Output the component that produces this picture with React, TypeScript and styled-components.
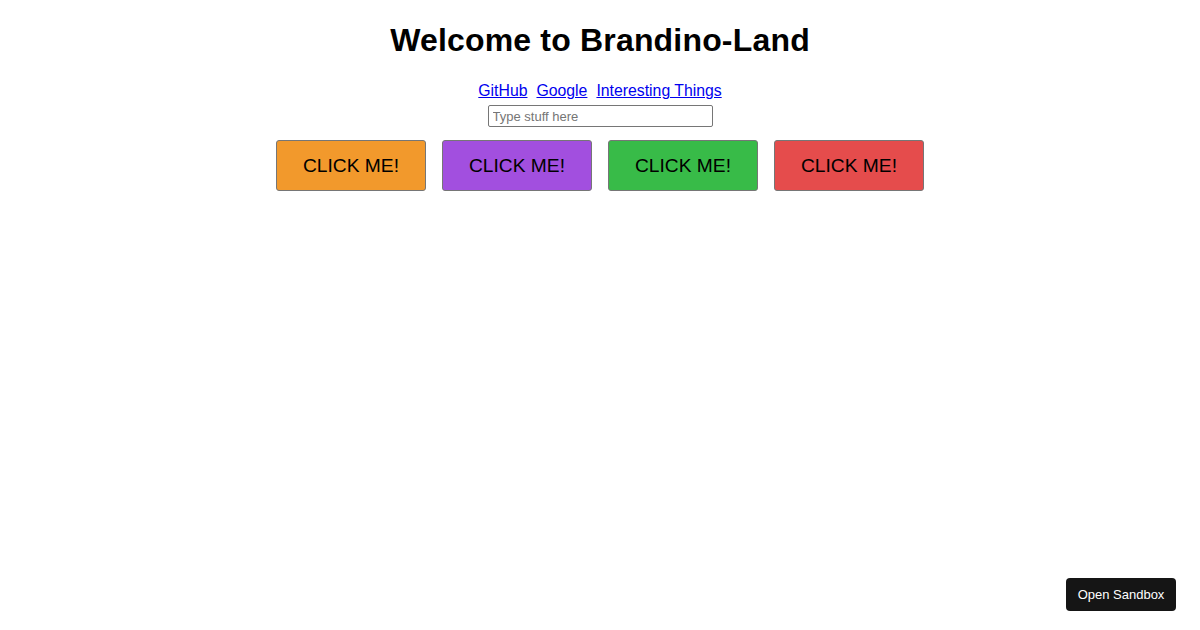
import styled, { createGlobalStyle } from "styled-components";

const GlobalStyle = createGlobalStyle`
  body {
    margin: 0;
    background: #ffffff;
    font-family: "Liberation Sans", Arial, sans-serif;
  }
`;

const Page = styled.main`
  display: flex;
  flex-direction: column;
  align-items: center;
  padding-top: 22px;
`;

const Title = styled.h1`
  margin: 0 0 23px;
  font-size: 32px;
  line-height: 37px;
  font-weight: bold;
  letter-spacing: 0.18px;
  color: #000000;
`;

const LinkRow = styled.nav`
  display: flex;
  gap: 9px;
  font-size: 15.8px;
  line-height: 18px;
`;

const NavLink = styled.a`
  color: #0000ee;
  text-decoration: underline;
`;

const SearchInput = styled.input`
  margin-top: 5px;
  width: 225px;
  height: 22px;
  box-sizing: border-box;
  padding: 1px 4px;
  border: 1px solid #767676;
  border-radius: 2px;
  font-family: "Liberation Sans", Arial, sans-serif;
  font-size: 13px;
  color: #000000;

  &::placeholder {
    color: #757575;
  }
`;

const ButtonRow = styled.div`
  display: flex;
  gap: 16px;
  margin-top: 13px;
`;

const ColorButton = styled.button<{ $bg: string }>`
  width: 150px;
  height: 51px;
  box-sizing: border-box;
  border: 1px solid #767676;
  border-radius: 3px;
  background: ${(p) => p.$bg};
  color: #000000;
  font-family: "Liberation Sans", Arial, sans-serif;
  font-size: 19.2px;
  cursor: pointer;
`;

const SandboxButton = styled.button`
  position: fixed;
  right: 24px;
  bottom: 19px;
  width: 110px;
  height: 33px;
  padding: 0;
  border: none;
  border-radius: 4px;
  background: #151515;
  color: #ffffff;
  font-family: "Liberation Sans", Arial, sans-serif;
  font-size: 13px;
  cursor: pointer;
`;

const colors = ["#f2992c", "#a24fdf", "#38bb48", "#e54c4c"];

const App = () => {
  return (
    <>
      <GlobalStyle />
      <Page>
        <Title>Welcome to Brandino-Land</Title>
        <LinkRow>
          <NavLink href="#">GitHub</NavLink>
          <NavLink href="#">Google</NavLink>
          <NavLink href="#">Interesting Things</NavLink>
        </LinkRow>
        <SearchInput placeholder="Type stuff here" />
        <ButtonRow>
          {colors.map((c) => (
            <ColorButton key={c} $bg={c}>
              CLICK ME!
            </ColorButton>
          ))}
        </ButtonRow>
      </Page>
      <SandboxButton>Open Sandbox</SandboxButton>
    </>
  );
};

export default App;
